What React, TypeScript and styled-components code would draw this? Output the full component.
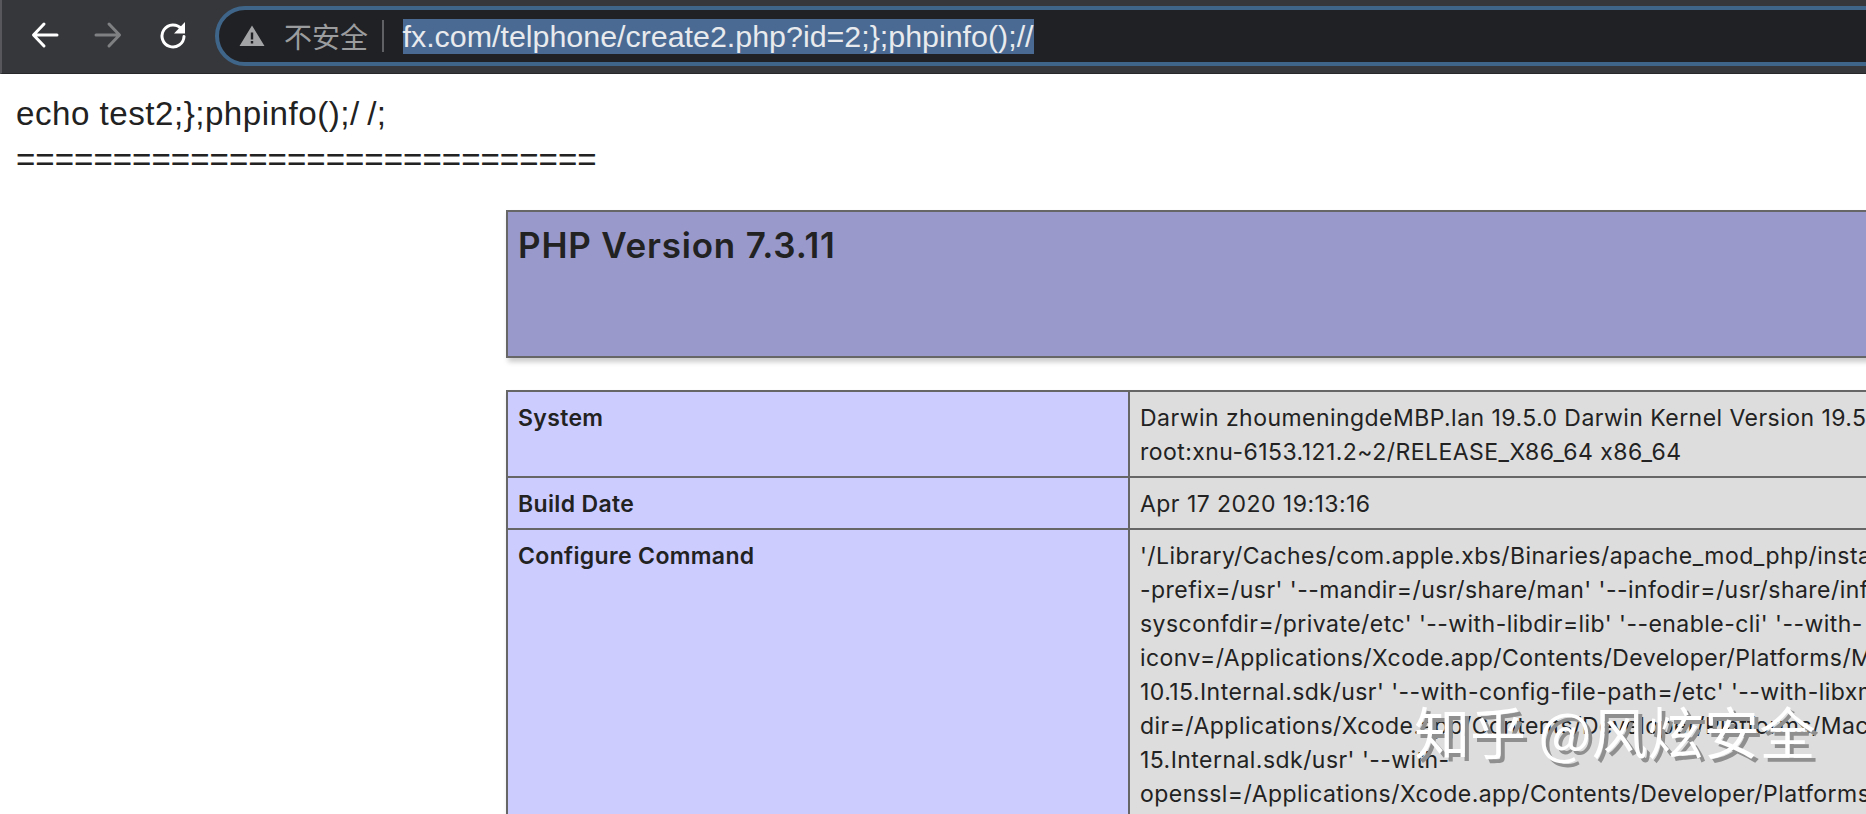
import React from "react";
import styled, { createGlobalStyle } from "styled-components";

const Global = createGlobalStyle`
  html, body { margin: 0; padding: 0; background: #fff; overflow: hidden; }
  #root { width: 1866px; height: 814px; overflow: hidden; }
`;

const Page = styled.div`
  width: 1866px;
  height: 814px;
  overflow: hidden;
  position: relative;
  background: #fff;
`;

const Toolbar = styled.header`
  box-sizing: border-box;
  height: 74px;
  background: #36373b;
  border-left: 2px solid #58585c;
  border-bottom: 1px solid #27282a;
  display: flex;
  align-items: center;
  padding: 0 0 1px 29px;
  overflow: hidden;
`;

const NavButton = styled.button<{ $gap: number }>`
  border: 0;
  padding: 0;
  background: none;
  width: 28px;
  height: 28px;
  margin: 0 ${(p) => p.$gap}px 2px 0;
  display: flex;
  color: #fff;
`;

const Omnibox = styled.div`
  box-sizing: border-box;
  flex: 0 0 1720px;
  height: 60px;
  border: 4px solid #3f6689;
  border-radius: 30px;
  background: #202124;
  display: flex;
  align-items: center;
  padding-left: 20px;
`;

const Insecure = styled.span`
  font: 28px "Noto Sans CJK SC", "Liberation Sans", sans-serif;
  color: #9b9c9e;
  margin-left: 19px;
  line-height: 1;
`;

const Divider = styled.span`
  width: 2px;
  height: 32px;
  background: #5f6164;
  margin: 0 19px 0 13.5px;
`;

const Url = styled.span`
  font: 30.4px/35px "Liberation Sans", Arial, sans-serif;
  color: #e8eaed;
  background: #4a6a94;
  white-space: nowrap;
`;

const Output = styled.div`
  font: 33.15px/46px "Liberation Sans", Arial, sans-serif;
  color: #222;
  padding: 17px 0 0 16px;
  height: 119px;
  white-space: nowrap;
`;

const EchoLine = styled.span`
  letter-spacing: 0.5px;
`;

const SpacedSlash = styled.span`
  letter-spacing: 8px;
`;

const InfoColumn = styled.main`
  margin-left: 506px;
  width: 1600px;
  font-family: Inter, "Liberation Sans", sans-serif;
  color: #222;
`;

const Banner = styled.div`
  box-sizing: border-box;
  height: 148px;
  background: #9999cc;
  border: 2px solid #666;
  box-shadow: 2px 4px 5px #ccc;
  padding: 12px 10px;
  margin-bottom: 32px;
`;

const Title = styled.h1`
  margin: 0;
  font-size: 35px;
  line-height: 42px;
  font-weight: 600;
  letter-spacing: 0.8px;
`;

const Table = styled.table`
  border-collapse: collapse;
  table-layout: fixed;
  width: 100%;
  box-shadow: 2px 4px 5px #ccc;
`;

const Label = styled.th`
  box-sizing: border-box;
  width: 622px;
  background: #ccccff;
  border: 2px solid #666;
  padding: 9px 10px 7px;
  text-align: left;
  vertical-align: top;
  font-size: 23px;
  line-height: 34px;
  font-weight: 600;
  letter-spacing: 0.35px;
`;

const Value = styled.td`
  background: #dddddd;
  border: 2px solid #666;
  padding: 9px 10px 7px;
  vertical-align: top;
  font-size: 23px;
  line-height: 34px;
  font-weight: 400;
  letter-spacing: 0.45px;
`;

const Line = styled.div`
  white-space: nowrap;
`;

const Watermark = styled.div`
  position: absolute;
  left: 1414px;
  top: 695px;
  font: 400 56px/70px "Noto Sans CJK SC", sans-serif;
  color: #fff;
  text-shadow: 4px 4px 0 #8f8f8f;
  white-space: nowrap;
`;

const Back = () => (
  <svg width="28" height="28" viewBox="0 0 28 28" fill="none" stroke="currentColor" strokeWidth="3" strokeLinecap="round" strokeLinejoin="round">
    <path d="M26 14H3M13 3 2.5 14 13 25" />
  </svg>
);

const Forward = () => (
  <svg width="28" height="28" viewBox="0 0 28 28" fill="none" stroke="#7f8082" strokeWidth="3" strokeLinecap="round" strokeLinejoin="round">
    <path d="M2 14h23M15 3l10.5 11L15 25" />
  </svg>
);

const Reload = () => (
  <svg width="28" height="28" viewBox="0 0 28 28" fill="none">
    <path d="M22.5 8A11 11 0 1 0 25 15.5" stroke="#fff" strokeWidth="3" strokeLinecap="round" />
    <path d="M26 1v11.5H15z" fill="#fff" />
  </svg>
);

const Warning = () => (
  <svg width="26" height="22" viewBox="0 0 26 22">
    <path fillRule="evenodd" fill="#a3a4a6" d="M13 .5 25.5 21H.5zM11.8 7.5v7h2.4v-7zM11.8 16v2.4h2.4V16z" />
  </svg>
);

const urlText = "fx.com/telphone/create2.php?id=2;};phpinfo();//";

const configLines = [
  "'/Library/Caches/com.apple.xbs/Binaries/apache_mod_php/install/Root/usr' '-",
  "-prefix=/usr' '--mandir=/usr/share/man' '--infodir=/usr/share/info' '--disable-dependency-tracking' '--",
  "sysconfdir=/private/etc' '--with-libdir=lib' '--enable-cli' '--with-",
  "iconv=/Applications/Xcode.app/Contents/Developer/Platforms/MacOSX.platform/Developer/SDKs/MacOSX",
  "10.15.Internal.sdk/usr' '--with-config-file-path=/etc' '--with-libxml-",
  "dir=/Applications/Xcode.app/Contents/Developer/Platforms/MacOSX.platform/Developer/SDKs/MacOSX10.",
  "15.Internal.sdk/usr' '--with-",
  "openssl=/Applications/Xcode.app/Contents/Developer/Platforms/MacOSX.platform/Developer/SDKs/MacOSX",
];

export default function App() {
  return (
    <Page>
      <Global />
      <Toolbar>
        <NavButton $gap={35}><Back /></NavButton>
        <NavButton $gap={37}><Forward /></NavButton>
        <NavButton $gap={28}><Reload /></NavButton>
        <Omnibox>
          <Warning />
          <Insecure>不安全</Insecure>
          <Divider />
          <Url>{urlText}</Url>
        </Omnibox>
      </Toolbar>
      <Output>
        <EchoLine>
          {"echo test2;};phpinfo();"}
          <SpacedSlash>/</SpacedSlash>
          {"/;"}
        </EchoLine>
        <br />
        ==============================
      </Output>
      <InfoColumn>
        <Banner>
          <Title>PHP Version 7.3.11</Title>
        </Banner>
        <Table>
          <tbody>
            <tr>
              <Label>System</Label>
              <Value>
                <Line>Darwin zhoumeningdeMBP.lan 19.5.0 Darwin Kernel Version 19.5.0: Tue May 26 20:41:44 PDT 2020;</Line>
                <Line>root:xnu-6153.121.2~2/RELEASE_X86_64 x86_64</Line>
              </Value>
            </tr>
            <tr>
              <Label>Build Date</Label>
              <Value>Apr 17 2020 19:13:16</Value>
            </tr>
            <tr>
              <Label>Configure Command</Label>
              <Value>
                {configLines.map((l) => (
                  <Line key={l}>{l}</Line>
                ))}
              </Value>
            </tr>
          </tbody>
        </Table>
      </InfoColumn>
      <Watermark>知乎 @风炫安全</Watermark>
    </Page>
  );
}
